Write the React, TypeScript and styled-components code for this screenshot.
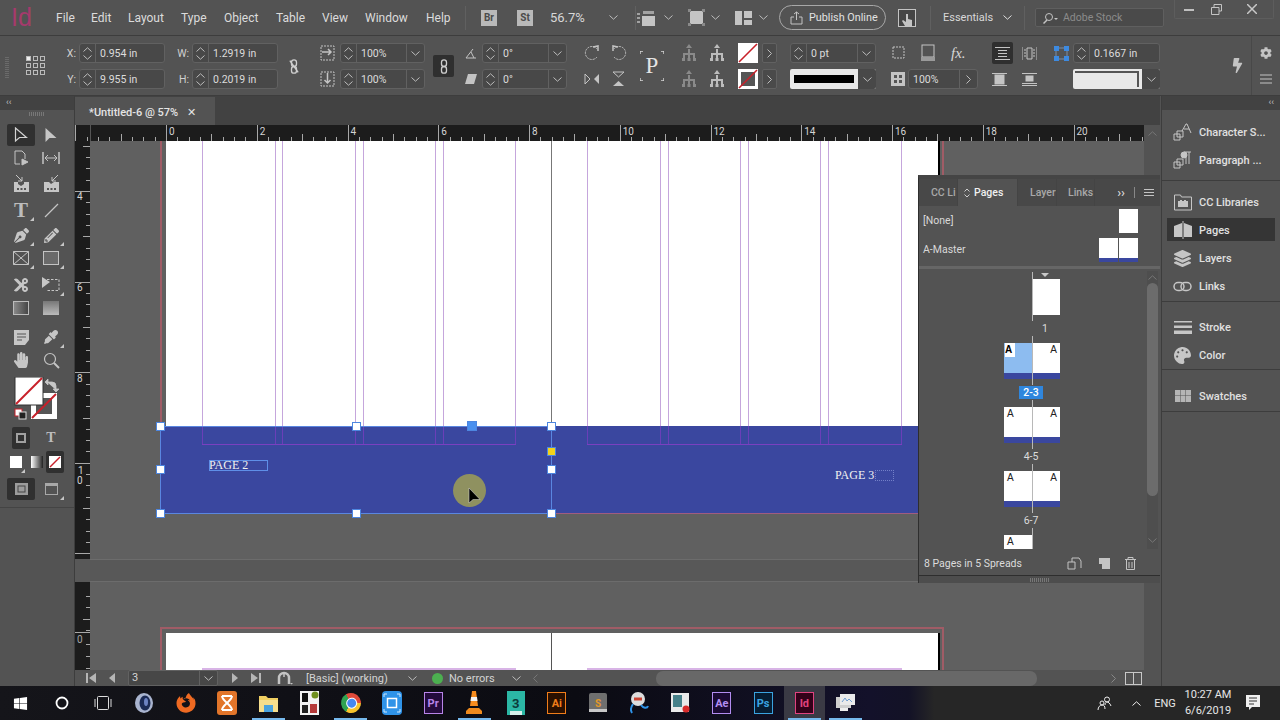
import React from "react";
import styled, { createGlobalStyle, css } from "styled-components";
import { FaBolt, FaCog, FaCut, FaEyeDropper, FaFirefoxBrowser, FaHandPaper, FaLayerGroup, FaPalette, FaPencilAlt, FaPenNib, FaWindows } from "react-icons/fa";

const Global = createGlobalStyle`
  html, body { margin: 0; padding: 0; background: #535353; overflow: hidden; }
  * { box-sizing: border-box; }
  body { font-family: Roboto, "Liberation Sans", sans-serif; color: #d8d8d8; }
`;

const Shell = styled.div`
  width: 1280px;
  height: 720px;
  display: grid;
  grid-template-rows: 36px 60px 590px 34px;
  overflow: hidden;
`;

/* ---------- small shared drawings ---------- */

const Chevron = ({ up, color = "#bdbdbd", w = 9 }: { up?: boolean; color?: string; w?: number }) => (
  <svg width={w} height="5" viewBox="0 0 9 5" fill="none" stroke={color} strokeWidth="1">
    <path d={up ? "M.5 4.5 4.5.8l4 3.7" : "M.5.5l4 3.7 4-3.7"} />
  </svg>
);

const Right = () => (
  <svg width="5" height="9" viewBox="0 0 5 9" fill="none" stroke="#bdbdbd"><path d="M.5.5l4 4-4 4" /></svg>
);

const Ico = ({ w = 16, h = 16, children }: { w?: number; h?: number; children: React.ReactNode }) => (
  <svg width={w} height={h} viewBox={`0 0 ${w} ${h}`} fill="none" stroke="#c4c4c4" strokeWidth="1">{children}</svg>
);

/* ---------- title bar ---------- */

const TitleBar = styled.header`
  display: flex;
  align-items: center;
  background: #535353;
  border-bottom: 1px solid #3d3d3d;
  position: relative;
`;
const Logo = styled.div`
  width: 56px;
  padding-left: 11px;
  font: 400 25px "Liberation Sans", sans-serif;
  color: #a63a6c;
`;
const Menu = styled.span<{ $w: number }>`
  width: ${p => p.$w}px;
  font-size: 12px;
  color: #dcdcdc;
`;
const VSep = styled.i<{ $ml: number; $h?: number }>`
  width: 1px;
  height: ${p => p.$h ?? 24}px;
  margin-left: ${p => p.$ml}px;
  background: #606060;
`;
const Bridge = styled.span<{ $ml: number }>`
  width: 16px;
  height: 16px;
  margin-left: ${p => p.$ml}px;
  background: #b9b9b9;
  color: #4b4b4b;
  font: 700 10px/16px Roboto, sans-serif;
  text-align: center;
`;
const TopItem = styled.span<{ $ml: number }>`
  margin-left: ${p => p.$ml}px;
  display: inline-flex;
  align-items: center;
  font-size: 12px;
  color: #d8d8d8;
`;
const PublishBtn = styled.button`
  width: 107px;
  height: 25px;
  margin-left: 11px;
  display: flex;
  align-items: center;
  gap: 6px;
  padding: 0 0 0 10px;
  background: transparent;
  border: 1px solid #a8a8a8;
  border-radius: 13px;
  color: #e2e2e2;
  font: 400 10.800px Roboto, sans-serif;
  white-space: nowrap;
`;
const SearchBox = styled.div`
  width: 129px;
  height: 19px;
  margin-left: 10px;
  display: flex;
  align-items: center;
  gap: 5px;
  padding-left: 6px;
  background: #4a4a4a;
  border: 1px solid #5f5f5f;
  border-radius: 2px;
  font-size: 10.5px;
  color: #8b8b8b;
`;
const WindowBtns = styled.div`
  position: absolute;
  top: 0;
  right: 6px;
  width: 100px;
  height: 19px;
  display: grid;
  grid-template-columns: 28px 26px 46px;
  align-items: center;
  justify-items: center;
  border: 1px solid #5d5d5d;
  border-top: 0;
  border-radius: 0 0 2px 2px;
`;

/* ---------- control bar ---------- */

const ControlBar = styled.section`
  display: flex;
  padding-top: 7px;
  background: #535353;
  border-bottom: 1px solid #3d3d3d;
  position: relative;
`;
const Col = styled.div<{ $ml?: number }>`
  display: flex;
  flex-direction: column;
  gap: 6px;
  margin-left: ${p => p.$ml ?? 0}px;
`;
const CenterCol = styled(Col)`
  height: 46px;
  justify-content: center;
`;
const Row2 = styled.div<{ $gap?: number }>`
  height: 20px;
  display: flex;
  align-items: center;
  gap: ${p => p.$gap ?? 0}px;
`;
const Lbl = styled.span<{ $w: number }>`
  width: ${p => p.$w}px;
  padding-right: 3px;
  text-align: right;
  font-size: 10.5px;
  color: #d0d0d0;
`;
const FieldBox = styled.div<{ $w: number }>`
  width: ${p => p.$w}px;
  height: 20px;
  display: flex;
  align-items: stretch;
  background: #484848;
  border: 1px solid #616161;
  border-radius: 3px;
  font-size: 10.5px;
  color: #dcdcdc;
`;
const Spin = styled.span`
  width: 16px;
  flex: none;
  display: flex;
  flex-direction: column;
  align-items: center;
  justify-content: center;
  gap: 3px;
  border-right: 1px solid #616161;
`;
const Value = styled.span`
  flex: 1;
  line-height: 19px;
  padding-left: 4px;
  white-space: nowrap;
`;
const Drop = styled.span`
  width: 18px;
  flex: none;
  display: flex;
  align-items: center;
  justify-content: center;
  border-left: 1px solid #616161;
`;
const Field = ({ w, value, spin = true, drop }: { w: number; value: string; spin?: boolean; drop?: "down" | "right" }) => (
  <FieldBox $w={w}>
    {spin && <Spin><Chevron up /><Chevron /></Spin>}
    <Value>{value}</Value>
    {drop && <Drop>{drop === "down" ? <Chevron /> : <Right />}</Drop>}
  </FieldBox>
);
const DarkBtn = styled.span<{ $w: number; $h: number }>`
  width: ${p => p.$w}px;
  height: ${p => p.$h}px;
  display: flex;
  align-items: center;
  justify-content: center;
  background: #2f2f2f;
  border-radius: 2px;
`;
const ArrowBtn = styled.span`
  width: 15px;
  height: 20px;
  display: flex;
  align-items: center;
  justify-content: center;
  background: #4a4a4a;
  border: 1px solid #616161;
  border-radius: 2px;
`;
const PreviewWrap = styled.div<{ $w: number }>`
  width: ${p => p.$w}px;
  height: 20px;
  display: flex;
  border-radius: 2px;
  overflow: hidden;
  background: #e8e8e8;
  padding: 0;
`;
const DropSolid = styled.span`
  width: 18px;
  margin-left: auto;
  display: flex;
  align-items: center;
  justify-content: center;
  background: #484848;
`;
const StrokeBar = styled.i`
  width: 60px;
  height: 8px;
  margin: 6px 4px;
  background: #000;
`;
const FrameStroke = styled.i`
  width: 64px;
  height: 16px;
  margin: 2px 0 0 2px;
  border-top: 2px solid #555;
  border-right: 2px solid #555;
`;
const GripDots = styled.i<{ $w: number; $h: number }>`
  display: block;
  width: ${p => p.$w}px;
  height: ${p => p.$h}px;
  background: repeating-linear-gradient(90deg, #777 0 1px, transparent 1px 2px);
`;
const BarGrip = styled(GripDots)`
  position: absolute;
  left: 5px;
  top: 20px;
  background: repeating-linear-gradient(0deg, #6a6a6a 0 1px, transparent 1px 2px);
`;
const RightTools = styled.div`
  position: absolute;
  right: 0;
  top: 0;
  bottom: 0;
  width: 29px;
  display: flex;
  flex-direction: column;
  align-items: center;
  justify-content: space-around;
  border-left: 1px solid #484848;
  padding: 4px 0;
`;
const BoltWrap = styled.span`
  position: absolute;
  left: 1230px;
  top: 22px;
  color: #c4c4c4;
  font-size: 15px;
`;
const PBox = styled.span`
  position: relative;
  width: 24px;
  height: 46px;
  display: flex;
  align-items: center;
  justify-content: center;
  font: 400 23px "Liberation Serif", serif;
  color: #e4e4e4;
  svg {
    position: absolute;
    left: 0;
    top: 8px;
  }
`;

const RefPoint = () => (
  <Ico w={20} h={20}>
    {[2, 9, 16].flatMap(y => [2, 9, 16].map(x => (
      <rect key={`${x}-${y}`} x={x - 1.5} y={y - 1.5} width="4" height="4" fill={x === 2 && y === 2 ? "#eee" : "none"} stroke="#bbb" />
    )))}
  </Ico>
);
const ChainIcon = ({ off }: { off?: boolean }) => (
  <svg width="10" height="15" viewBox="0 0 12 18" fill="none" stroke="#cfcfcf" strokeWidth="1.6">
    <rect x="3" y="1" width="6" height="8" rx="3" />
    <rect x="3" y="9" width="6" height="8" rx="3" />
    {off && <path d="M1 2l10 14" />}
  </svg>
);
const NoStroke = ({ hollow }: { hollow?: boolean }) => (
  <svg width="20" height="20" viewBox="0 0 20 20">
    <rect width="20" height="20" fill="#fff" />
    {hollow && <rect x="3" y="3" width="14" height="14" fill="#555" />}
    <path d="M1 19 19 1" stroke="#c8202a" strokeWidth="1.6" />
  </svg>
);
const Org = ({ fade }: { fade?: boolean }) => (
  <svg width="16" height="18" viewBox="0 0 16 18" fill={fade ? "#8a8a8a" : "#bcbcbc"}>
    <path d="M8 0l3 4H5zM7 5h2v4h5v5h-2v-3H9v3H7v-3H4v3H2V9h5z" />
    <rect x="1" y="14" width="3" height="3" /><rect x="6.5" y="14" width="3" height="3" /><rect x="12" y="14" width="3" height="3" />
  </svg>
);

const Controls = () => (
  <ControlBar>
    <BarGrip $w={4} $h={22} />
    <CenterCol $ml={26}><RefPoint /></CenterCol>
    <Col>
      <Row2><Lbl $w={33}>X:</Lbl><Field w={86} value="0.954 in" /></Row2>
      <Row2><Lbl $w={33}>Y:</Lbl><Field w={86} value="9.955 in" /></Row2>
    </Col>
    <Col>
      <Row2><Lbl $w={27}>W:</Lbl><Field w={86} value="1.2919 in" /></Row2>
      <Row2><Lbl $w={27}>H:</Lbl><Field w={86} value="0.2019 in" /></Row2>
    </Col>
    <CenterCol $ml={11}><ChainIcon off /></CenterCol>
    <Col $ml={21}>
      <Row2 $gap={5}>
        <Ico w={15} h={18}><path d="M1 2h13v14H1z" strokeDasharray="2 1" /><path d="M2 8h9m-3-3 3 3-3 3" strokeWidth="1.5" /></Ico>
        <Field w={85} value="100%" drop="down" />
      </Row2>
      <Row2 $gap={5}>
        <Ico w={15} h={18}><path d="M1 2h13v14H1z" strokeDasharray="2 1" /><path d="M7.5 3v10m-3-3 3 3 3-3" strokeWidth="1.5" /></Ico>
        <Field w={85} value="100%" drop="down" />
      </Row2>
    </Col>
    <CenterCol $ml={8}>
      <DarkBtn $w={21} $h={22}><ChainIcon /></DarkBtn>
    </CenterCol>
    <Col $ml={11}>
      <Row2 $gap={5}>
        <Ico w={12} h={12}><path d="M1 11h10M1 11 8 2" /><path d="M6 5l3 6" /></Ico>
        <Field w={85} value="0°" drop="down" />
      </Row2>
      <Row2 $gap={5}>
        <svg width="12" height="12" viewBox="0 0 12 12" fill="#c4c4c4"><path d="M3 1h9L9 11H0z" /></svg>
        <Field w={85} value="0°" drop="down" />
      </Row2>
    </Col>
    <Col $ml={17}>
      <Row2 $gap={10}>
        <Ico w={16} h={18}><path d="M13 13a6.5 6.5 0 1 1 0-8" strokeDasharray="2 1" /><path d="M9 3l5-1v5" strokeWidth="1.5" /></Ico>
        <Ico w={17} h={18}><path d="M4 13a6.5 6.5 0 1 0 0-8" strokeDasharray="2 1" /><path d="M8 3 3 2v5" strokeWidth="1.5" /></Ico>
      </Row2>
      <Row2 $gap={10}>
        <svg width="16" height="14" viewBox="0 0 16 14"><path d="M1 2l5 5-5 5z" fill="none" stroke="#c4c4c4" /><path d="M15 2l-5 5 5 5z" fill="#c4c4c4" /></svg>
        <svg width="17" height="16" viewBox="0 0 17 16"><path d="M3 1l5.500 5L14 1z" fill="none" stroke="#c4c4c4" /><path d="M3 15l5.500-5 5.500 5z" fill="#c4c4c4" /></svg>
      </Row2>
    </Col>
    <Col $ml={13}>
      <PBox>
        <svg width="24" height="30" viewBox="0 0 24 30" fill="none" stroke="#d8d8d8" strokeWidth="1.400"><path d="M0 3V0h3M21 0h3v3M0 27v3h3M21 30h3v-3" /></svg>
        P
      </PBox>
    </Col>
    <Col $ml={17}>
      <Row2 $gap={12}><Org fade /><Org /></Row2>
      <Row2 $gap={12}><Org fade /><Org /></Row2>
    </Col>
    <Col $ml={13}>
      <Row2 $gap={4}><NoStroke /><ArrowBtn><Right /></ArrowBtn></Row2>
      <Row2 $gap={4}><NoStroke hollow /><ArrowBtn><Right /></ArrowBtn></Row2>
    </Col>
    <Col $ml={13}>
      <Field w={86} value="0 pt" drop="down" />
      <PreviewWrap $w={86}><StrokeBar /><DropSolid><Chevron /></DropSolid></PreviewWrap>
    </Col>
    <Col $ml={15}>
      <Row2 $gap={15}>
        <Ico w={15} h={16}><rect x="2" y="2" width="11" height="11" strokeDasharray="2 1" /></Ico>
        <svg width="14" height="18" viewBox="0 0 14 18"><rect x="1" y="1" width="12" height="12" fill="none" stroke="#c4c4c4" /><rect x="0" y="13" width="14" height="4" fill="#9a9a9a" /></svg>
        <TopItem $ml={1} style={{ fontFamily: "Liberation Serif", fontStyle: "italic", fontSize: 15 }}>fx.</TopItem>
      </Row2>
      <Row2 $gap={3}>
        <svg width="14" height="14" viewBox="0 0 14 14"><rect width="14" height="14" fill="#c4c4c4" /><path d="M3 3h3v3H3zM8 3h3v3H8zM3 8h3v3H3zM8 8h3v3H8z" fill="#555" /></svg>
        <Field w={70} value="100%" spin={false} drop="right" />
      </Row2>
    </Col>
    <Col $ml={14}>
      <Row2 $gap={9}>
        <DarkBtn $w={21} $h={22}><Ico w={15} h={15}><path d="M0 1.500h15M0 13.500h15M3 4.500h9M3 7.500h9M3 10.500h9" /></Ico></DarkBtn>
        <Ico w={15} h={15}><path d="M0 1v13M15 1v13M5 2h5v11H5z" /><path d="M2 4h2M2 7h2M2 10h2M11 4h2M11 7h2M11 10h2" /></Ico>
      </Row2>
      <Row2 $gap={15}>
        <Ico w={15} h={15}><rect x="3" y="3" width="9" height="9" fill="#c4c4c4" /><path d="M0 1.500h15M0 13.500h15" /></Ico>
        <Ico w={15} h={15}><rect x="4" y="4" width="7" height="5" fill="#c4c4c4" /><path d="M0 1.500h15M0 11.500h15M0 13.500h15" /></Ico>
      </Row2>
    </Col>
    <Col $ml={17}>
      <Row2 $gap={4}>
        <svg width="15" height="15" viewBox="0 0 15 15"><path d="M2 2h11v11H2z" fill="none" stroke="#7a8ea8" /><path d="M0 0h5v5H0zM10 0h5v5h-5zM0 10h5v5H0zM10 10h5v5h-5z" fill="#3d8ae0" /></svg>
        <Field w={87} value="0.1667 in" />
      </Row2>
      <Row2 $gap={4}>
        <i style={{ width: 15 }} />
        <PreviewWrap $w={87}><FrameStroke /><DropSolid><Chevron /></DropSolid></PreviewWrap>
      </Row2>
    </Col>
    <BoltWrap><FaBolt /></BoltWrap>
    <RightTools>
      <FaCog color="#c4c4c4" size={12} />
      <Ico w={12} h={10}><path d="M0 1h12M0 5h12M0 9h12" /></Ico>
    </RightTools>
  </ControlBar>
);

const TitleStrip = () => (
  <TitleBar>
    <Logo>Id</Logo>
    <Menu $w={35}>File</Menu>
    <Menu $w={37}>Edit</Menu>
    <Menu $w={53}>Layout</Menu>
    <Menu $w={43}>Type</Menu>
    <Menu $w={52}>Object</Menu>
    <Menu $w={46}>Table</Menu>
    <Menu $w={43}>View</Menu>
    <Menu $w={61}>Window</Menu>
    <Menu $w={30}>Help</Menu>
    <VSep $ml={9} />
    <Bridge $ml={15}>Br</Bridge>
    <Bridge $ml={20}>St</Bridge>
    <TopItem $ml={17} style={{ fontSize: 13, width: 36 }}>56.7%</TopItem>
    <TopItem $ml={23}><Chevron /></TopItem>
    <VSep $ml={17} />
    <TopItem $ml={1}><svg width="18" height="18" viewBox="0 0 18 18" fill="#c4c4c4"><rect x="5" y="7" width="13" height="10" /><path d="M0 4h3v2H0zM0 8h3v2H0zM0 12h3v2H0zM6 2h11v3H6z" opacity=".7" /></svg></TopItem>
    <TopItem $ml={9}><Chevron /></TopItem>
    <TopItem $ml={15}><svg width="17" height="17" viewBox="0 0 17 17"><rect x="2" y="2" width="13" height="13" fill="#c4c4c4" /><path d="M0 0h3v3H0zM14 0h3v3h-3zM0 14h3v3H0zM14 14h3v3h-3z" fill="#8a8a8a" /></svg></TopItem>
    <TopItem $ml={6}><Chevron /></TopItem>
    <TopItem $ml={15}><svg width="17" height="14" viewBox="0 0 17 14" fill="#c4c4c4"><path d="M0 0h7v14H0zM9 0h8v7H9zM9 9h8v5H9z" /></svg></TopItem>
    <TopItem $ml={7}><Chevron /></TopItem>
    <PublishBtn>
      <Ico w={13} h={14}><path d="M1 6h3M9 6h3v7H1V6" /><path d="M6.500 9V1M4 3l2.500-2L9 3" /></Ico>
      Publish Online
    </PublishBtn>
    <TopItem $ml={12}>
      <svg width="18" height="18" viewBox="0 0 18 18"><rect x=".5" y=".5" width="17" height="17" fill="#454545" stroke="#c4c4c4" /><path d="M8 5h2v5l4 1v6H7l-3-5 1-1 3 2z" fill="#c4c4c4" /></svg>
    </TopItem>
    <VSep $ml={14} />
    <TopItem $ml={12} style={{ fontSize: 11, width: 50 }}>Essentials</TopItem>
    <TopItem $ml={10}><Chevron color="#e0e0e0" /></TopItem>
    <VSep $ml={12} />
    <SearchBox>
      <Ico w={16} h={12}><circle cx="7" cy="5" r="3.500" /><path d="M5 8 1.500 11.500" strokeWidth="1.500" /><path d="M12 6h4l-2 2z" fill="#c4c4c4" stroke="none" /></Ico>
      Adobe Stock
    </SearchBox>
    <WindowBtns>
      <svg width="10" height="3"><rect width="10" height="2" y="1" fill="#c0c0c0" /></svg>
      <Ico w={11} h={11}><path d="M3 3V.5h7.500V7H8M.5 3.500H8V10.500H.5z" /></Ico>
      <svg width="10" height="10" viewBox="0 0 10 10" stroke="#c8c8c8" strokeWidth="1.500"><path d="M0 0l10 10M10 0 0 10" /></svg>
    </WindowBtns>
  </TitleBar>
);

/* ---------- left tools ---------- */

const Work = styled.main`
  display: grid;
  grid-template-columns: 75px 1085px 120px;
  min-height: 0;
  position: relative;
`;
const Tools = styled.aside`
  background: #535353;
  border-right: 1px solid #3d3d3d;
  display: flex;
  flex-direction: column;
`;
const Strip = styled.div<{ $right?: boolean }>`
  height: 14px;
  flex: none;
  background: #424242;
  font-size: 9px;
  line-height: 13px;
  color: #c2c2c2;
  padding: 0 6px;
  text-align: ${p => (p.$right ? "right" : "left")};
`;
const ToolGrip = styled(GripDots)`
  margin: 2px auto 0;
`;
const ToolRow = styled.div<{ $mt: number }>`
  height: 22px;
  flex: none;
  margin-top: ${p => p.$mt}px;
  padding-left: 6px;
  display: grid;
  grid-template-columns: 30px 30px;
  align-items: center;
  justify-items: center;
`;
const FillRow = styled(ToolRow)`
  grid-template-columns: 24px 18px 18px;
  padding-left: 4px;
`;
const Tool = styled.span<{ $on?: boolean; $flag?: boolean; $w?: number }>`
  position: relative;
  width: ${p => p.$w ?? 28}px;
  height: 22px;
  display: flex;
  align-items: center;
  justify-content: center;
  color: #c6c6c6;
  border-radius: 2px;
  background: ${p => (p.$on ? "#303030" : "transparent")};
  ${p => p.$flag && css`
    &::after {
      content: "";
      position: absolute;
      right: 1px;
      bottom: 0;
      border-style: solid;
      border-width: 0 0 4px 4px;
      border-color: transparent transparent #c6c6c6 transparent;
    }
  `}
`;
const SerifT = styled.span<{ $size: number }>`
  font: 700 ${p => p.$size}px "Liberation Serif", serif;
  color: #bdbdbd;
`;
const ToolSep = styled.hr`
  margin: 7px 0 0;
  border: 0;
  border-top: 1px solid #444;
`;
const SwatchArt = styled.div`
  height: 44px;
  margin-top: 6px;
  padding-left: 14px;
`;

const Gradient = () => (
  <svg width="16" height="14"><defs><linearGradient id="g2"><stop stopColor="#8a8a8a" /><stop offset="1" stopColor="#444" /></linearGradient></defs><rect x=".5" y=".5" width="15" height="13" fill="url(#g2)" stroke="#bbb" /></svg>
);
const Feather = () => (
  <svg width="16" height="14"><defs><linearGradient id="g3" x2="0" y2="1"><stop stopColor="#777" /><stop offset="1" stopColor="#bbb" /></linearGradient></defs><rect width="16" height="14" fill="url(#g3)" /></svg>
);

const ToolBox = () => (
  <Tools>
    <Strip>‹‹</Strip>
    <ToolGrip $w={16} $h={4} />
    <ToolRow $mt={8}>
      <Tool $on><svg width="14" height="16" viewBox="0 0 14 16" fill="none" stroke="#d4d4d4" strokeWidth="1.2"><path d="M1.500 1v13l4-3.500h7z" /></svg></Tool>
      <Tool><svg width="14" height="16" viewBox="0 0 14 16" fill="#c6c6c6"><path d="M1.500 1v14l4-4h7z" /></svg></Tool>
    </ToolRow>
    <ToolRow $mt={1}>
      <Tool><Ico w={16} h={16}><path d="M2 1h7l3 3v5M2 1v13h5" /><path d="M9 9l6 3-6 3z" fill="#c4c4c4" /></Ico></Tool>
      <Tool><Ico w={18} h={14}><path d="M1 1v12M17 1v12" strokeWidth="1.500" /><path d="M3 7h12M6 4 3 7l3 3M12 4l3 3-3 3" /></Ico></Tool>
    </ToolRow>
    <ToolRow $mt={3}>
      <Tool><svg width="15" height="17" viewBox="0 0 15 17" fill="#c6c6c6"><path d="M0 7h4v2l3 2 3-2V7h5v10H0z" /><path d="M2 0l6 6M8 2v4H4" stroke="#c6c6c6" fill="none" /><path d="M3 13h2v2H3zM6.500 13h2v2h-2zM10 13h2v2h-2z" fill="#555" /></svg></Tool>
      <Tool><svg width="15" height="17" viewBox="0 0 15 17" fill="#c6c6c6"><path d="M0 7h5l2 2 3-2h5v10H0z" /><path d="M13 0 7 6M7 2v4h4" stroke="#c6c6c6" fill="none" transform="translate(1)" /><path d="M3 13h2v2H3zM6.500 13h2v2h-2zM10 13h2v2h-2z" fill="#555" /></svg></Tool>
    </ToolRow>
    <ToolRow $mt={5}>
      <Tool $flag><SerifT $size={21}>T</SerifT></Tool>
      <Tool><Ico w={15} h={15}><path d="M1 14 14 1" strokeWidth="1.200" /></Ico></Tool>
    </ToolRow>
    <ToolRow $mt={3}>
      <Tool $flag><FaPenNib size={15} /></Tool>
      <Tool $flag><FaPencilAlt size={15} /></Tool>
    </ToolRow>
    <ToolRow $mt={1}>
      <Tool $flag><Ico w={16} h={14}><path d="M.5.5h15v13H.5zM.5.5l15 13M15.500.5l-15 13" /></Ico></Tool>
      <Tool $flag><svg width="16" height="14" viewBox="0 0 16 14"><rect x=".5" y=".5" width="15" height="13" fill="#6a6a6a" stroke="#c4c4c4" /></svg></Tool>
    </ToolRow>
    <ToolRow $mt={5}>
      <Tool><FaCut size={16} style={{ transform: "scaleX(-1)" }} /></Tool>
      <Tool $flag><svg width="20" height="16" viewBox="0 0 20 16" fill="none" stroke="#c6c6c6"><path d="M6 2.500h12v11H6" strokeDasharray="2.500 1.500" /><path d="M1 0l8 5-8 6z" fill="#c6c6c6" stroke="none" /></svg></Tool>
    </ToolRow>
    <ToolRow $mt={1}>
      <Tool><Gradient /></Tool>
      <Tool><Feather /></Tool>
    </ToolRow>
    <ToolRow $mt={7}>
      <Tool><svg width="15" height="15" viewBox="0 0 15 15"><path d="M0 0h15v10l-4 5H0z" fill="#c6c6c6" /><path d="M3 4h9M3 7h9M3 10h5" stroke="#555" /></svg></Tool>
      <Tool $flag><FaEyeDropper size={14} /></Tool>
    </ToolRow>
    <ToolRow $mt={1}>
      <Tool><FaHandPaper size={16} /></Tool>
      <Tool><Ico w={17} h={17}><circle cx="7" cy="7" r="5.500" strokeWidth="1.200" /><path d="M11 11l5 5" strokeWidth="2" /></Ico></Tool>
    </ToolRow>
    <SwatchArt>
      <svg width="46" height="44" viewBox="0 0 46 44">
        <rect x="17" y="16" width="26" height="26" fill="#fff" />
        <rect x="22" y="21" width="16" height="16" fill="#555" />
        <path d="M18 41 42 17" stroke="#c8202a" strokeWidth="2" />
        <rect x="1" y="0" width="28" height="28" fill="#fff" stroke="#333" />
        <path d="M2 27 28 1" stroke="#c8202a" strokeWidth="2" />
        <path d="M33 5h5a4 4 0 0 1 4 4v4M31 5l3-3v6zM42 15l-3-3h6z" stroke="#c6c6c6" fill="#c6c6c6" strokeWidth=".8" />
        <rect x="1" y="32" width="7" height="7" fill="#fff" stroke="#c8202a" />
        <rect x="5" y="35" width="7" height="7" fill="#222" stroke="#ddd" />
      </svg>
    </SwatchArt>
    <ToolRow $mt={6}>
      <Tool $on $w={18}><svg width="10" height="10"><rect x="1" y="1" width="8" height="8" fill="none" stroke="#a0a0a0" strokeWidth="2" /></svg></Tool>
      <Tool><SerifT $size={14}>T</SerifT></Tool>
    </ToolRow>
    <FillRow $mt={2}>
      <Tool $flag $w={20}><svg width="12" height="12"><rect width="12" height="12" fill="#fff" /></svg></Tool>
      <Tool $w={18}><svg width="12" height="12"><defs><linearGradient id="g1"><stop stopColor="#fff" /><stop offset="1" stopColor="#222" /></linearGradient></defs><rect width="12" height="12" fill="url(#g1)" /></svg></Tool>
      <Tool $on $w={18}><svg width="12" height="12" viewBox="0 0 12 12"><rect width="12" height="12" fill="#fff" /><path d="M1 11 11 1" stroke="#c8202a" strokeWidth="1.400" /></svg></Tool>
    </FillRow>
    <ToolRow $mt={5}>
      <Tool $on><svg width="13" height="12" viewBox="0 0 13 12"><rect width="13" height="12" fill="#9c9c9c" /><rect x="3" y="3" width="7" height="6" fill="none" stroke="#444" /></svg></Tool>
      <Tool $flag><svg width="13" height="12" viewBox="0 0 13 12"><rect x=".5" y=".5" width="12" height="11" fill="none" stroke="#a8a8a8" /><rect x="1" y="1" width="11" height="2" fill="#a8a8a8" /></svg></Tool>
    </ToolRow>
    <ToolSep />
  </Tools>
);

/* ---------- document ---------- */

const DocArea = styled.section`
  display: grid;
  grid-template-rows: 29px 16px 529px 16px;
  min-width: 0;
`;
const TabBar = styled.div`
  background: #424242;
  display: flex;
  align-items: flex-end;
`;
const DocTab = styled.div`
  width: 140px;
  height: 28px;
  display: flex;
  align-items: center;
  padding: 2px 0 0 14px;
  gap: 9px;
  background: #535353;
  font-size: 11px;
  font-weight: 500;
  color: #e4e4e4;
`;
const RulerRow = styled.div`
  display: flex;
  height: 16px;
`;
const RulerFill = styled.div`
  width: 16px;
  background: #535353;
  display: flex;
  align-items: center;
  justify-content: center;
`;
const Middle = styled.div`
  display: flex;
  min-height: 0;
`;
const Pasteboard = styled.div`
  position: relative;
  width: 1054px;
  height: 529px;
  overflow: hidden;
  background: #606060;
`;
const ScrollV = styled.div`
  width: 16px;
  background: #535353;
`;
const RulerV = styled.div`
  width: 15px;
  flex: none;
  background: #1c1c1c;
  overflow: hidden;
`;

const HRuler = () => {
  const ox = 166 - 75;
  const step = 90.75;
  const ticks = Array.from({ length: 100 }, (_, i) => i - 8);
  return (
    <svg width="1069" height="16" style={{ display: "block", background: "#1c1c1c" }}>
      <g stroke="#a8a8a8">
        <path d="M15.500 0v16" stroke="#555" />
        {ticks.map(i => {
          const x = Math.round(ox + (i * step) / 8) + 0.5;
          return <path key={i} d={`M${x} ${i % 8 === 0 ? 0 : i % 4 === 0 ? 9 : 12}V16`} />;
        })}
      </g>
      {Array.from({ length: 11 }, (_, i) => (
        <text key={i} x={ox + (i * step) + 3} y="10" fontSize="10" fill="#d4d4d4" fontFamily="Roboto">{i * 2}</text>
      ))}
    </svg>
  );
};
const VRuler = () => {
  const ticks = Array.from({ length: 50 }, (_, i) => i);
  const step = 90.6 / 8;
  return (
    <svg width="15" height="529" style={{ display: "block" }}>
      <g stroke="#a8a8a8">
        {ticks.map(i => {
          const y = Math.round(50 - 16 * step + (i * step)) + 0.5;
          if (y > 418 || y < 0) return null;
          return <path key={i} d={`M${i % 8 === 0 ? 0 : i % 4 === 0 ? 8 : 11} ${y}H15`} />;
        })}
        {Array.from({ length: 4 }, (_, i) => (
          <path key={i} d={`M${i === 2 ? 8 : 11} ${Math.round(441 + 11.3 * i + 14) + 0.5}H15`} />
        ))}
        <path d="M0 491.500H15M11 503.500H15M11 515.500H15M11 527.500H15" />
      </g>
      <g fontSize="10" fill="#d4d4d4" fontFamily="Roboto">
        <text x="2" y="59">4</text>
        <text x="2" y="150">6</text>
        <text x="2" y="241">8</text>
        <text x="3" y="333">1</text>
        <text x="2" y="343">0</text>
        <text x="2" y="502" fill="#a8a8a8">0</text>
      </g>
      <rect y="418" width="15" height="23" fill="#585858" />
    </svg>
  );
};

const Sheet = styled.div<{ $x: number; $y: number; $w: number; $h: number; $bg?: string }>`
  position: absolute;
  left: ${p => p.$x - 90}px;
  top: ${p => p.$y - 141}px;
  width: ${p => p.$w}px;
  height: ${p => p.$h}px;
  background: ${p => p.$bg ?? "transparent"};
`;
const Band = styled(Sheet)`
  background: #585858;
  border-top: 1px solid #6c6c6c;
  border-bottom: 1px solid #6c6c6c;
`;
const Bleed = styled(Sheet)`
  border: 2px solid #a05c66;
`;
const Selection = styled(Sheet)`
  border: 1px solid #5a86e0;
`;
const Handle = styled.i<{ $x: number; $y: number; $c?: string; $s?: number }>`
  position: absolute;
  left: ${p => p.$x - 90 - (p.$s ?? 7) / 2}px;
  top: ${p => p.$y - 141 - (p.$s ?? 7) / 2}px;
  width: ${p => p.$s ?? 7}px;
  height: ${p => p.$s ?? 7}px;
  background: ${p => p.$c ?? "#fff"};
  outline: 1px solid #4d86e0;
`;
const PageText = styled.span<{ $x: number; $y: number }>`
  position: absolute;
  left: ${p => p.$x - 90}px;
  top: ${p => p.$y - 141}px;
  font: 400 12px/13px "Liberation Serif", serif;
  color: #f2f2f2;
  white-space: nowrap;
`;
const TextFrame = styled(Sheet)<{ $dash?: boolean }>`
  border: 1px ${p => (p.$dash ? "dotted #7380c8" : "solid #5f8fe8")};
`;
const Halo = styled(Sheet)`
  border-radius: 50%;
  background: #8f9160;
`;

const guides = [202, 275, 282, 355, 363, 435, 443, 515, 587, 660, 668, 740, 748, 820, 828, 901];

const Canvas = () => (
  <Pasteboard>
    <Sheet $x={166} $y={141} $w={772} $h={285} $bg="#fff" />
    <Sheet $x={160} $y={426} $w={784} $h={87} $bg="#3a479f" />
    <Sheet $x={160} $y={141} $w={2} $h={285} $bg="#a05c66" />
    <Sheet $x={942} $y={141} $w={2} $h={285} $bg="#a05c66" />
    <Sheet $x={938} $y={141} $w={2} $h={285} $bg="#000" />
    <Sheet $x={551} $y={513} $w={393} $h={1} $bg="#a05c80" />
    {guides.map(x => <Sheet key={x} $x={x} $y={141} $w={1} $h={285} $bg="#c5a6dc" />)}
    {guides.map(x => <Sheet key={x} $x={x} $y={426} $w={1} $h={18} $bg="#6a3fb8" />)}
    <Sheet $x={202} $y={444} $w={314} $h={1} $bg="#7a40c0" />
    <Sheet $x={587} $y={444} $w={315} $h={1} $bg="#7a40c0" />
    <Sheet $x={551} $y={141} $w={1} $h={285} $bg="#777" />
    <Selection $x={160} $y={426} $w={392} $h={88} />
    <PageText $x={209} $y={459}>PAGE 2</PageText>
    <TextFrame $x={209} $y={460} $w={59} $h={11} />
    <PageText $x={835} $y={469}>PAGE 3</PageText>
    <TextFrame $dash $x={875} $y={470} $w={19} $h={11} />
    {[160, 356, 551].flatMap(x => [426, 469, 513].filter(y => !(x === 356 && y === 469)).map(y => <Handle key={`${x}${y}`} $x={x} $y={y} />))}
    <Handle $x={472} $y={426} $c="#4a90ef" $s={8} />
    <Handle $x={551} $y={451} $c="#f2d21a" $s={7} />
    <Halo $x={453} $y={474} $w={33} $h={33} />
    <Sheet $x={468} $y={487} $w={14} $h={20}>
      <svg width="14" height="20" viewBox="0 0 14 20"><path d="M1 1v15l4-3.500 7 0z" fill="#000" stroke="#ddd" strokeWidth=".5" /></svg>
    </Sheet>

    <Band $x={90} $y={559} $w={1054} $h={23} />

    <Bleed $x={160} $y={627} $w={784} $h={60} />
    <Sheet $x={166} $y={633} $w={772} $h={40} $bg="#fff" />
    <Sheet $x={938} $y={633} $w={2} $h={40} $bg="#000" />
    <Sheet $x={551} $y={633} $w={1} $h={40} $bg="#555" />
    <Sheet $x={202} $y={668} $w={314} $h={2} $bg="#d8b4e6" />
    <Sheet $x={587} $y={668} $w={315} $h={2} $bg="#d8b4e6" />
  </Pasteboard>
);

/* ---------- status bar ---------- */

const StatusBar = styled.footer`
  display: flex;
  align-items: center;
  background: #535353;
  font-size: 11px;
  color: #d4d4d4;
  position: relative;
`;
const StatusItem = styled.span<{ $ml: number; $w?: number }>`
  margin-left: ${p => p.$ml}px;
  width: ${p => (p.$w ? `${p.$w}px` : "auto")};
  display: inline-flex;
  align-items: center;
  white-space: nowrap;
`;
const PageField = styled.div`
  width: 90px;
  height: 16px;
  margin-left: 13px;
  display: flex;
  background: #474747;
  border: 1px solid #616161;
  border-radius: 2px;
  font-size: 11px;
  line-height: 14px;
  padding-left: 3px;
`;
const PageDrop = styled.span`
  width: 18px;
  margin-left: auto;
  display: flex;
  align-items: center;
  justify-content: center;
  border-left: 1px solid #616161;
`;
const GreenDot = styled.i`
  width: 11px;
  height: 11px;
  margin-left: 15px;
  border-radius: 50%;
  background: #4caf50;
`;
const HThumb = styled.i`
  position: absolute;
  left: 581px;
  top: 1px;
  width: 381px;
  height: 15px;
  background: #686868;
  border-radius: 7px;
`;
const Status = () => (
  <StatusBar>
    <StatusItem $ml={11}><svg width="10" height="10" viewBox="0 0 10 10" fill="#b5b5b5"><path d="M0 0h2v10H0zM10 0v10L3 5z" /></svg></StatusItem>
    <StatusItem $ml={13}><svg width="6" height="10" viewBox="0 0 6 10" fill="#b5b5b5"><path d="M6 0v10L0 5z" /></svg></StatusItem>
    <PageField>3<PageDrop><Chevron /></PageDrop></PageField>
    <StatusItem $ml={14}><svg width="6" height="10" viewBox="0 0 6 10" fill="#b5b5b5"><path d="M0 0v10l6-5z" /></svg></StatusItem>
    <StatusItem $ml={13}><svg width="10" height="10" viewBox="0 0 10 10" fill="#b5b5b5"><path d="M8 0h2v10H8zM0 0v10l7-5z" /></svg></StatusItem>
    <StatusItem $ml={16}><Ico w={16} h={14}><path d="M2 13V7a5 5 0 0 1 10 0v6" strokeWidth="2.500" /><path d="M7 2v4" strokeWidth="1.500" /><path d="M13 12h3l-1.500 1.500z" fill="#c4c4c4" stroke="none" /></Ico></StatusItem>
    <StatusItem $ml={13} $w={100}>[Basic] (working)</StatusItem>
    <StatusItem $ml={2}><Chevron /></StatusItem>
    <GreenDot />
    <StatusItem $ml={6} $w={60}>No errors</StatusItem>
    <StatusItem $ml={3}><Chevron /></StatusItem>
    <StatusItem $ml={12}><svg width="5" height="9" viewBox="0 0 5 9" fill="none" stroke="#777"><path d="M4.500.5l-4 4 4 4" /></svg></StatusItem>
    <HThumb />
    <StatusItem $ml={573}><svg width="5" height="9" viewBox="0 0 5 9" fill="none" stroke="#888"><path d="M.5.5l4 4-4 4" /></svg></StatusItem>
    <StatusItem $ml={9}><svg width="17" height="13"><rect x=".5" y=".5" width="16" height="12" fill="none" stroke="#c8c8c8" /><path d="M8.500 0v13" stroke="#c8c8c8" /></svg></StatusItem>
  </StatusBar>
);

/* ---------- dock ---------- */

const Dock = styled.aside`
  background: #535353;
  border-left: 1px solid #3d3d3d;
  margin-left: 1px;
  width: 119px;
  display: flex;
  flex-direction: column;
`;
const DockGroup = styled.div<{ $top: number; $bottom: number }>`
  padding: ${p => p.$top}px 0 ${p => p.$bottom}px;
  border-bottom: 1px solid #3d3d3d;
`;
const DockItem = styled.div<{ $on?: boolean }>`
  height: 28px;
  display: flex;
  align-items: center;
  gap: 7px;
  padding-left: 11px;
  font-size: 11px;
  font-weight: 500;
  color: #e0e0e0;
  white-space: nowrap;
  position: relative;
  z-index: 0;
  ${p => p.$on && css`
    &::before {
      content: "";
      position: absolute;
      z-index: -1;
      left: 5px;
      top: 2px;
      width: 108px;
      height: 23px;
      background: #353535;
    }
  `}
`;
const DockIcon = styled.span`
  width: 19px;
  display: flex;
  justify-content: center;
  color: #c6c6c6;
`;

const DockPanel = () => (
  <Dock>
    <Strip $right>‹‹</Strip>
    <DockGroup $top={8} $bottom={6}>
      <DockItem><DockIcon><svg width="19" height="18" viewBox="0 0 19 18" fill="none" stroke="#c6c6c6"><path d="M1 11h6v6H1zM4 8h6v6H4z" /><path d="M9 8 13 1h1l4 9M11 6h5" /></svg></DockIcon>Character S...</DockItem>
      <DockItem><DockIcon><svg width="19" height="18" viewBox="0 0 19 18" fill="none" stroke="#c6c6c6"><path d="M1 11h6v6H1zM4 8h6v6H4z" /><path d="M11 1h7M13 1v12M16 1v12" /><circle cx="11" cy="4" r="3" fill="#c6c6c6" /></svg></DockIcon>Paragraph ...</DockItem>
    </DockGroup>
    <DockGroup $top={7} $bottom={1}>
      <DockItem><DockIcon><svg width="18" height="18" viewBox="0 0 18 18"><path d="M.5 2h6l1 2h10v13H.5z" fill="none" stroke="#c6c6c6" /><path d="M4 8h2V7h2v1h2V7h2v1h2v6H4z" fill="#c6c6c6" /></svg></DockIcon>CC Libraries</DockItem>
      <DockItem $on><DockIcon><svg width="18" height="18" viewBox="0 0 18 18" fill="#c6c6c6"><path d="M0 5l8-3v14H0zM18 5l-8-3v14h8z" /><path d="M9 0v18" stroke="#c6c6c6" /></svg></DockIcon>Pages</DockItem>
      <DockItem><DockIcon><FaLayerGroup size={17} /></DockIcon>Layers</DockItem>
      <DockItem><DockIcon><svg width="19" height="11" viewBox="0 0 19 11" fill="none" stroke="#c6c6c6" strokeWidth="1.500"><rect x="1" y="1.500" width="10" height="8" rx="4" /><rect x="8" y="1.500" width="10" height="8" rx="4" /></svg></DockIcon>Links</DockItem>
    </DockGroup>
    <DockGroup $top={11} $bottom={0}>
      <DockItem><DockIcon><svg width="18" height="13" viewBox="0 0 18 13" fill="#c6c6c6"><rect width="18" height="1.500" /><rect y="4.500" width="18" height="2.500" /><rect y="9.500" width="18" height="3.500" /></svg></DockIcon>Stroke</DockItem>
      <DockItem><DockIcon><FaPalette size={17} /></DockIcon>Color</DockItem>
    </DockGroup>
    <DockGroup $top={12} $bottom={1}>
      <DockItem><DockIcon><svg width="16" height="12" viewBox="0 0 16 12" fill="#b5b5b5"><path d="M0 0h5v5.500H0zM5.500 0h5v5.500h-5zM11 0h5v5.500h-5zM0 6h5v6H0zM5.500 6h5v6h-5zM11 6h5v6h-5z" /></svg></DockIcon>Swatches</DockItem>
    </DockGroup>
  </Dock>
);

/* ---------- floating pages panel ---------- */

const Float = styled.div`
  position: absolute;
  left: 918px;
  top: 79px;
  width: 242px;
  height: 408px;
  display: flex;
  flex-direction: column;
  background: #535353;
  border-top: 4px solid #454545;
  border-left: 1px solid #2e2e2e;
`;
const PanelTabs = styled.div`
  height: 27px;
  flex: none;
  display: flex;
  align-items: stretch;
  background: #484848;
  position: relative;
  font-size: 10.500px;
  font-weight: 500;
  color: #a9a9a9;
`;
const PanelTab = styled.span<{ $w: number; $on?: boolean; $pl?: number }>`
  width: ${p => p.$w}px;
  overflow: hidden;
  white-space: nowrap;
  display: flex;
  align-items: center;
  padding-left: ${p => p.$pl ?? 12}px;
  gap: 4px;
  border-right: 1px solid #444;
  ${p => p.$on && css`
    background: #535353;
    color: #f0f0f0;
  `}
`;
const PanelTail = styled.span`
  margin-left: auto;
  width: 65px;
  display: flex;
  align-items: center;
  gap: 6px;
  color: #d8d8d8;
  font-size: 13px;
  justify-content: flex-end;
  padding-right: 6px;
`;
const TailBar = styled.i`
  width: 1px;
  height: 11px;
  margin: 0 3px;
  background: #888;
`;
const MasterRow = styled.div`
  height: 29px;
  flex: none;
  display: flex;
  align-items: center;
  justify-content: space-between;
  padding: 0 22px 0 4px;
  font-size: 10.500px;
  color: #d8d8d8;
`;
const MasterThumb = styled.div`
  display: flex;
  gap: 1px;
`;
const MPage = styled.i<{ $band?: boolean }>`
  width: 19px;
  height: 24px;
  background: ${p => (p.$band ? "linear-gradient(#fff 0 20px, #3a479f 20px)" : "#fff")};
`;
const PanelSep = styled.hr`
  flex: none;
  margin: 2px 0 0;
  height: 3px;
  border: 0;
  background: #666;
`;
const ListWrap = styled.div`
  height: 280px;
  flex: none;
  display: flex;
  overflow: hidden;
`;
const PageList = styled.div`
  flex: 1;
  display: flex;
  flex-direction: column;
  align-items: center;
  padding: 10px 2px 0 0;
`;
const SpreadItem = styled.div`
  width: 56px;
  height: 64px;
  flex: none;
  position: relative;
`;
const SpreadPages = styled.div`
  height: 36px;
  display: flex;
  position: relative;
  &::after {
    content: "";
    position: absolute;
    left: 28px;
    top: -7px;
    bottom: -6px;
    width: 1px;
    background: #b8b8b8;
  }
`;
const MiniPage = styled.div<{ $sel?: boolean; $align?: "left" | "right"; $blank?: boolean }>`
  width: 28px;
  height: 36px;
  position: relative;
  background: ${p => (p.$blank ? "transparent" : p.$sel ? "#8dbcf0" : "#fff")};
  font: 400 10px/14px "Liberation Sans", sans-serif;
  color: #222;
  padding: 0 3px;
  text-align: ${p => p.$align ?? "left"};
`;
const MiniBand = styled.i`
  position: absolute;
  left: 0;
  right: 0;
  bottom: 0;
  height: 6px;
  background: #3a479f;
`;
const SelA = styled.b`
  display: inline-block;
  width: 10px;
  margin-left: -2px;
  background: #fff;
  color: #000;
`;
const PageLabel = styled.div<{ $off?: number }>`
  position: absolute;
  top: 43px;
  left: 0;
  width: 56px;
  text-align: center;
  transform: translateX(${p => p.$off ?? 0}px);
  font-size: 10.500px;
  line-height: 13px;
  color: #dcdcdc;
`;
const PageBadge = styled.span`
  display: inline-block;
  width: 24px;
  height: 13px;
  background: #2f86dd;
  color: #fff;
  font-weight: 500;
`;
const TopMark = styled.i`
  position: absolute;
  left: 37px;
  top: -6px;
  border-style: solid;
  border-width: 4px 4px 0;
  border-color: #c8c8c8 transparent transparent;
`;
const ScrollTrack = styled.div`
  width: 11px;
  margin: 2px 2px 0 0;
  flex: none;
  position: relative;
  display: flex;
  flex-direction: column;
  align-items: center;
  padding-top: 4px;
  background: #4e4e4e;
`;
const ScrollThumb = styled.i`
  width: 11px;
  height: 213px;
  margin-top: 3px;
  margin-bottom: 42px;
  border-radius: 6px;
  background: #6c6c6c;
`;
const PanelFoot = styled.div`
  height: 27px;
  flex: none;
  display: flex;
  align-items: center;
  padding: 3px 0 0 5px;
  font-size: 10.500px;
  color: #dcdcdc;
  border-bottom: 1px solid #2e2e2e;
`;
const FootIcons = styled.div`
  margin-left: auto;
  padding-right: 24px;
  display: flex;
  align-items: center;
  gap: 15px;
`;
const PanelGrip = styled.div`
  flex: 1;
  background: #4d4d4d;
  display: flex;
  justify-content: center;
  align-items: center;
`;

const Spread = ({ label, sel, leftOnly, rightOnly, badge }: { label?: string; sel?: boolean; leftOnly?: boolean; rightOnly?: boolean; badge?: boolean }) => (
  <SpreadItem>
    <SpreadPages>
      {rightOnly ? <MiniPage $blank /> : (
        <MiniPage $sel={sel}>{sel ? <SelA>A</SelA> : "A"}{!leftOnly && <MiniBand />}</MiniPage>
      )}
      {leftOnly ? <MiniPage $blank /> : (
        <MiniPage $align="right">{!rightOnly && "A"}{!rightOnly && <MiniBand />}</MiniPage>
      )}
    </SpreadPages>
    {rightOnly && <TopMark />}
    {label && <PageLabel $off={rightOnly ? 13 : -1}>{badge ? <PageBadge>{label}</PageBadge> : label}</PageLabel>}
  </SpreadItem>
);

const PagesPanel = () => (
  <Float>
    <PanelTabs>
      <PanelTab $w={39}>CC Li</PanelTab>
      <PanelTab $w={60} $on $pl={6}>
        <svg width="6" height="10" viewBox="0 0 6 10" fill="none" stroke="#ccc"><path d="M.5 3.500 3 1l2.500 2.500M.5 6.500 3 9l2.500-2.500" /></svg>
        Pages
      </PanelTab>
      <PanelTab $w={39}>Layer</PanelTab>
      <PanelTab $w={38} $pl={11}>Links</PanelTab>
      <PanelTail>
        <span>››</span>
        <TailBar />
        <Ico w={10} h={7}><path d="M0 .5h10M0 3.500h10M0 6.500h10" /></Ico>
      </PanelTail>
    </PanelTabs>
    <MasterRow>[None]<MasterThumb><MPage /></MasterThumb></MasterRow>
    <MasterRow>A-Master<MasterThumb><MPage $band /><MPage $band /></MasterThumb></MasterRow>
    <PanelSep />
    <ListWrap>
      <PageList>
        <Spread rightOnly label="1" />
        <Spread sel label="2-3" badge />
        <Spread label="4-5" />
        <Spread label="6-7" />
        <Spread leftOnly />
      </PageList>
      <ScrollTrack>
        <Chevron up color="#777" />
        <ScrollThumb />
        <Chevron color="#777" />
      </ScrollTrack>
    </ListWrap>
    <PanelFoot>
      8 Pages in 5 Spreads
      <FootIcons>
        <Ico w={17} h={13}><path d="M1 5h7v7H1zM5 5V1h7l2 3v7" /></Ico>
        <svg width="11" height="11" viewBox="0 0 11 11" fill="#c4c4c4"><path d="M0 0h11v11H3V6H0z" /></svg>
        <Ico w={11} h={13}><path d="M0 2.500h11M3 2V.5h5V2M1.500 3v9.500h8V3M4 5v6M7 5v6" /></Ico>
      </FootIcons>
    </PanelFoot>
    <PanelGrip><GripDots $w={20} $h={4} /></PanelGrip>
  </Float>
);

/* ---------- task bar ---------- */

const TaskBar = styled.nav`
  display: flex;
  align-items: center;
  background: linear-gradient(90deg, #15151a 0, #0b0b12 45%, #13112a 68%, #131226 71%, #262626 73%);
  position: relative;
`;
const Slot = styled.span<{ $run?: boolean; $active?: boolean }>`
  position: relative;
  width: 41.250px;
  height: 34px;
  flex: none;
  display: flex;
  align-items: center;
  justify-content: center;
  background: ${p => (p.$active ? "#3a3a44" : "transparent")};
  ${p => p.$run && css`
    &::after {
      content: "";
      position: absolute;
      left: 4px;
      right: 4px;
      bottom: 0;
      height: 2px;
      background: #76b9ed;
    }
  `}
`;
const SlotMark = styled.b<{ $c: string; $size: number }>`
  position: absolute;
  color: ${p => p.$c};
  font-size: ${p => p.$size}px;
`;
const AppTile = styled.span<{ $c: string; $bg: string }>`
  width: 19px;
  height: 22px;
  display: flex;
  align-items: center;
  justify-content: center;
  border: 1px solid ${p => p.$c};
  background: ${p => p.$bg};
  color: ${p => p.$c};
  font: 700 11px Roboto, sans-serif;
`;
const ChromeBall = styled.span`
  width: 20px;
  height: 20px;
  border-radius: 50%;
  background: conic-gradient(#e04a3a 0 120deg, #f7c32c 120deg 240deg, #2fa351 240deg 360deg);
  display: flex;
  align-items: center;
  justify-content: center;
  transform: rotate(-30deg);
  &::after {
    content: "";
    width: 9px;
    height: 9px;
    border-radius: 50%;
    background: #4688f1;
    border: 1.500px solid #fff;
  }
`;
const Tray = styled.div`
  position: absolute;
  right: 0;
  top: 0;
  bottom: 0;
  display: flex;
  align-items: center;
  color: #e6e6e6;
`;
const TrayCell = styled.span<{ $w: number; $pr?: number; $ml?: number }>`
  width: ${p => p.$w}px;
  padding-right: ${p => p.$pr ?? 0}px;
  margin-left: ${p => p.$ml ?? 0}px;
  display: flex;
  justify-content: center;
  font-size: 11px;
`;
const Clock = styled.span`
  width: 50px;
  margin-left: 4px;
  text-align: center;
  font-size: 11px;
  line-height: 16px;
  white-space: nowrap;
  color: #e6e6e6;
`;

const Taskbar = () => (
  <TaskBar>
    <Slot><FaWindows color="#fff" size={15} /></Slot>
    <Slot><svg width="14" height="14"><circle cx="7" cy="7" r="5.500" fill="none" stroke="#fff" strokeWidth="1.800" /></svg></Slot>
    <Slot><svg width="18" height="14" viewBox="0 0 18 14" fill="none" stroke="#ddd"><rect x="3.500" y=".5" width="11" height="13" rx="1" /><path d="M1 3v8M17 3v8" /></svg></Slot>
    <Slot><svg width="20" height="22" viewBox="0 0 20 22"><ellipse cx="10" cy="11" rx="9" ry="10" fill="#a9b4cf" /><ellipse cx="11" cy="11" rx="5.500" ry="7.500" fill="#1b2a55" /><ellipse cx="12" cy="10" rx="2" ry="4" fill="#6c82c2" /></svg></Slot>
    <Slot><FaFirefoxBrowser color="#ef6a22" size={20} /></Slot>
    <Slot><svg width="20" height="24" viewBox="0 0 20 24"><rect width="20" height="24" rx="3" fill="#e2752a" /><path d="M5 5c0 5 10 9 10 14M15 5C15 10 5 14 5 19" fill="none" stroke="#fff" strokeWidth="2" /><path d="M5 5h10M5 19h10" stroke="#fff" strokeWidth="2" /></svg></Slot>
    <Slot $run><svg width="19" height="20" viewBox="0 0 19 20"><path d="M0 3h7l2 2h10v14H0z" fill="#f0cf62" /><path d="M0 7h19v12H0z" fill="#f6de8d" /><rect x="5" y="12" width="9" height="7" fill="#4aa3df" /></svg></Slot>
    <Slot><svg width="19" height="24" viewBox="0 0 19 24"><rect x="0" y="0" width="19" height="24" fill="#f3f3f3" /><rect x="2" y="2" width="6" height="9" fill="#111" /><circle cx="15" cy="4" r="3.500" fill="#6f8f1e" /><rect x="2" y="14" width="6" height="8" fill="#222" /><rect x="10" y="13" width="7" height="9" fill="#b53a3a" /></svg></Slot>
    <Slot $run><ChromeBall /></Slot>
    <Slot><svg width="20" height="24" viewBox="0 0 20 24"><rect width="20" height="24" rx="4" fill="#2f93e8" /><rect x="5.500" y="7.500" width="9" height="9" fill="none" stroke="#fff" strokeWidth="1.500" /><path d="M2 6V3h3M18 6V3h-3M2 18v3h3M18 18v3h-3" stroke="#cfe6fb" fill="none" /></svg></Slot>
    <Slot><AppTile $c="#b884e8" $bg="#240b3c">Pr</AppTile></Slot>
    <Slot $run><svg width="16" height="24" viewBox="0 0 16 24"><path d="M6 0h4l2 15H4z" fill="#f78c1e" /><path d="M5 6h6l.5 4h-7z" fill="#f4f4f4" /><path d="M0 20l3-3h10l3 3v3H0z" fill="#ef8a1d" /></svg></Slot>
    <Slot><svg width="18" height="24" viewBox="0 0 18 24"><rect width="18" height="24" fill="#2bb7a5" /><path d="M3 20h12v4H3z" fill="#d7f0ec" /></svg><SlotMark $c="#0b3b3a" $size={13}>3</SlotMark></Slot>
    <Slot><AppTile $c="#f07d1a" $bg="#2a1000">Ai</AppTile></Slot>
    <Slot><svg width="18" height="20" viewBox="0 0 18 20"><rect width="18" height="18" rx="2" fill="#6f6f6f" /><rect y="16" width="18" height="3" fill="#c8c8c8" /></svg><SlotMark $c="#e2982a" $size={10}>S</SlotMark></Slot>
    <Slot><svg width="22" height="24" viewBox="0 0 22 24"><circle cx="10" cy="8" r="7" fill="#ddd" /><path d="M5 13c-2 3-3 6-1 9M13 14c2 3 6 4 7 1" stroke="#2f93e8" fill="none" strokeWidth="2" /><path d="M6 8h8" stroke="#c43" strokeWidth="3" /></svg></Slot>
    <Slot><svg width="20" height="22" viewBox="0 0 20 22"><rect y="1" width="18" height="19" fill="#eaeaea" /><rect x="2" y="3" width="9" height="12" fill="#47818a" /><circle cx="15" cy="17" r="3.500" fill="#d92a2a" /></svg></Slot>
    <Slot><AppTile $c="#b28cf0" $bg="#1a0a33">Ae</AppTile></Slot>
    <Slot><AppTile $c="#3aa3e0" $bg="#061d33">Ps</AppTile></Slot>
    <Slot $run $active><AppTile $c="#e0437f" $bg="#33021a">Id</AppTile></Slot>
    <Slot $run><svg width="20" height="18" viewBox="0 0 20 18"><rect y="3" width="15" height="11" fill="#cfcfcf" /><path d="M4 14h8v3H4z" fill="#eee" /><rect x="4" y="0" width="15" height="11" fill="#eaeaea" /><path d="M6 8l3-4 2 3 2-2 3 3" stroke="#6f9ed1" fill="none" /></svg></Slot>
    <Tray>
      <TrayCell $w={30}><svg width="15" height="15" viewBox="0 0 15 15" fill="none" stroke="#eee"><circle cx="10" cy="3.500" r="2.500" /><circle cx="5" cy="7" r="2" /><path d="M1 14c0-3 2-5 4-5s3 1 3 4M8 9c0-2 1-3 2-3s3 1 4 4" /></svg></TrayCell>
      <TrayCell $w={30} $ml={2}><Chevron up color="#eee" w={11} /></TrayCell>
      <TrayCell $w={28}>ENG</TrayCell>
      <Clock>10:27 AM<br />6/6/2019</Clock>
      <TrayCell $w={47} $pr={7}><svg width="15" height="16" viewBox="0 0 15 16"><path d="M0 0h14v12H6l-3 3v-3H0z" fill="#f0f0f0" /><path d="M3 3h8M3 6h8M3 9h5" stroke="#333" /></svg></TrayCell>
    </Tray>
  </TaskBar>
);

export default function App() {
  return (
    <>
      <Global />
      <Shell>
        <TitleStrip />
        <Controls />
        <Work>
          <ToolBox />
          <DocArea>
            <TabBar>
              <DocTab>*Untitled-6 @ 57% <span>✕</span></DocTab>
            </TabBar>
            <RulerRow>
              <HRuler />
              <RulerFill><Chevron up color="#777" /></RulerFill>
            </RulerRow>
            <Middle>
              <RulerV><VRuler /></RulerV>
              <Canvas />
              <ScrollV />
            </Middle>
            <Status />
          </DocArea>
          <DockPanel />
          <PagesPanel />
        </Work>
        <Taskbar />
      </Shell>
    </>
  );
}
